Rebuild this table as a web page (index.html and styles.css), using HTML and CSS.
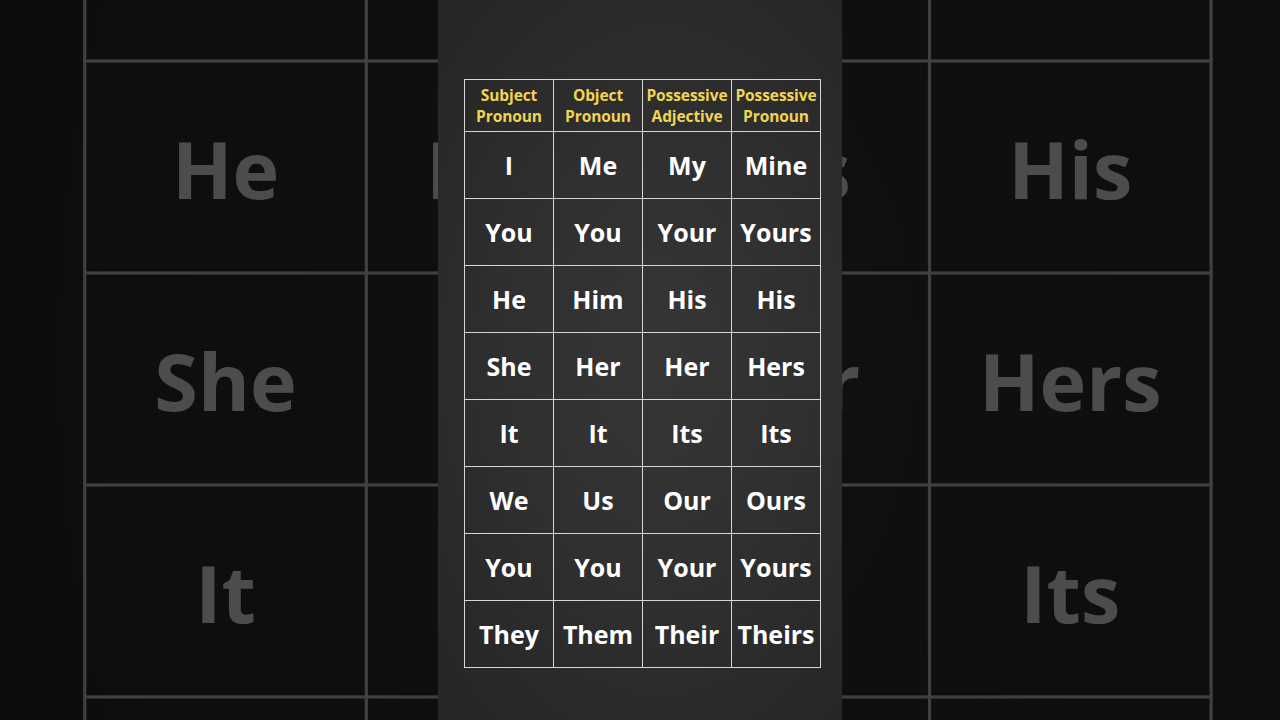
FILE: index.html
```html
<!DOCTYPE html>
<html lang="en">
<head>
<meta charset="utf-8">
<title>Pronouns</title>
<link rel="stylesheet" href="styles.css">
</head>
<body>
<div class="backdrop" aria-hidden="true">
  <div class="zoomed">
    <div class="panel panel-bg">
      <table class="grid">
        <thead>
          <tr><th>Subject<br>Pronoun</th><th>Object<br>Pronoun</th><th>Possessive<br>Adjective</th><th>Possessive<br>Pronoun</th></tr>
        </thead>
        <tbody>
          <tr><td>I</td><td>Me</td><td>My</td><td>Mine</td></tr>
          <tr><td>You</td><td>You</td><td>Your</td><td>Yours</td></tr>
          <tr><td>He</td><td>Him</td><td>His</td><td>His</td></tr>
          <tr><td>She</td><td>Her</td><td>Her</td><td>Hers</td></tr>
          <tr><td>It</td><td>It</td><td>Its</td><td>Its</td></tr>
          <tr><td>We</td><td>Us</td><td>Our</td><td>Ours</td></tr>
          <tr><td>You</td><td>You</td><td>Your</td><td>Yours</td></tr>
          <tr><td>They</td><td>Them</td><td>Their</td><td>Theirs</td></tr>
        </tbody>
      </table>
    </div>
  </div>
</div>
<main class="panel">
  <table class="grid">
    <thead>
      <tr><th>Subject<br>Pronoun</th><th>Object<br>Pronoun</th><th>Possessive<br>Adjective</th><th>Possessive<br>Pronoun</th></tr>
    </thead>
    <tbody>
      <tr><td>I</td><td>Me</td><td>My</td><td>Mine</td></tr>
      <tr><td>You</td><td>You</td><td>Your</td><td>Yours</td></tr>
      <tr><td>He</td><td>Him</td><td>His</td><td>His</td></tr>
      <tr><td>She</td><td>Her</td><td>Her</td><td>Hers</td></tr>
      <tr><td>It</td><td>It</td><td>Its</td><td>Its</td></tr>
      <tr><td>We</td><td>Us</td><td>Our</td><td>Ours</td></tr>
      <tr><td>You</td><td>You</td><td>Your</td><td>Yours</td></tr>
      <tr><td>They</td><td>Them</td><td>Their</td><td>Theirs</td></tr>
    </tbody>
  </table>
</main>
</body>
</html>
```

FILE: styles.css
```css
html, body {
  margin: 0;
  padding: 0;
}

body {
  width: 1280px;
  height: 720px;
  overflow: hidden;
  position: relative;
  background: #0c0c0c;
  font-family: "Open Sans", "Noto Sans", "DejaVu Sans", sans-serif;
  display: flex;
  justify-content: center;
}

.backdrop {
  position: absolute;
  inset: 0;
  overflow: hidden;
  z-index: 0;
}

.zoomed {
  width: 1280px;
  height: 720px;
  display: flex;
  justify-content: center;
  transform: scale(3.164);
  transform-origin: 640px 360px;
  filter: brightness(0.3);
}

.panel {
  position: relative;
  z-index: 1;
  width: 404px;
  height: 720px;
  box-sizing: border-box;
  padding: 79px 0 0 26px;
  background: radial-gradient(ellipse 70% 60% at 55% 50%, #363636 0%, #2f2f2f 55%, #272727 100%);
  display: flex;
  align-items: flex-start;
}

.panel-bg {
  z-index: 0;
}

.grid {
  border-collapse: collapse;
  table-layout: fixed;
  width: 357px;
  color: #ffffff;
}

.grid th,
.grid td {
  border: 1px solid #d6d6d6;
  width: 25%;
  padding: 0;
  text-align: center;
  vertical-align: middle;
  font-weight: 700;
  white-space: nowrap;
}

.grid th {
  height: 51px;
  color: #f1d452;
  font-size: 15.5px;
  line-height: 21px;
  letter-spacing: -0.1px;
}

.grid td {
  height: 66px;
  font-size: 25px;
  line-height: 30px;
}
```
